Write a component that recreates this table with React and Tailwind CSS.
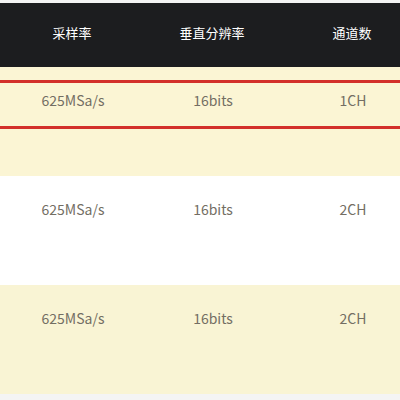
import React from 'react';

const rows = [
  { rate: '625MSa/s', bits: '16bits', ch: '1CH', bg: 'bg-[#fbf5d4]', mark: true },
  { rate: '625MSa/s', bits: '16bits', ch: '2CH', bg: 'bg-white' },
  { rate: '625MSa/s', bits: '16bits', ch: '2CH', bg: 'bg-[#f9f4d4]' },
];

export default function App() {
  return (
    <div
      className="w-[400px] h-[400px] overflow-hidden bg-[#f4f4f4] pt-[3px]"
      style={{ fontFamily: '"Noto Sans CJK SC", "Noto Sans", sans-serif' }}
    >
      <div className="grid grid-cols-[140px_140px_140px] pl-[2px] h-[64px] bg-[#1c1d1f] text-white text-[13px] items-center pb-[4px]">
        <div className="text-center">采样率</div>
        <div className="text-center">垂直分辨率</div>
        <div className="text-center">通道数</div>
      </div>
      {rows.map((r, i) => (
        <div key={i} className={`relative h-[109px] ${r.bg}`}>
          <div className="grid grid-cols-[140px_140px_140px] pl-[3px] pt-[22px] text-[14px] text-[#736e63] leading-[22px]">
            <div className="text-center">{r.rate}</div>
            <div className="text-center">{r.bits}</div>
            <div className="text-center">{r.ch}</div>
          </div>
          {r.mark && (
            <>
              <div className="absolute left-0 right-0 top-[13px] h-[3px] bg-[#d3302a]" />
              <div className="absolute left-0 right-0 top-[59px] h-[3px] bg-[#d3302a]" />
            </>
          )}
        </div>
      ))}
    </div>
  );
}
